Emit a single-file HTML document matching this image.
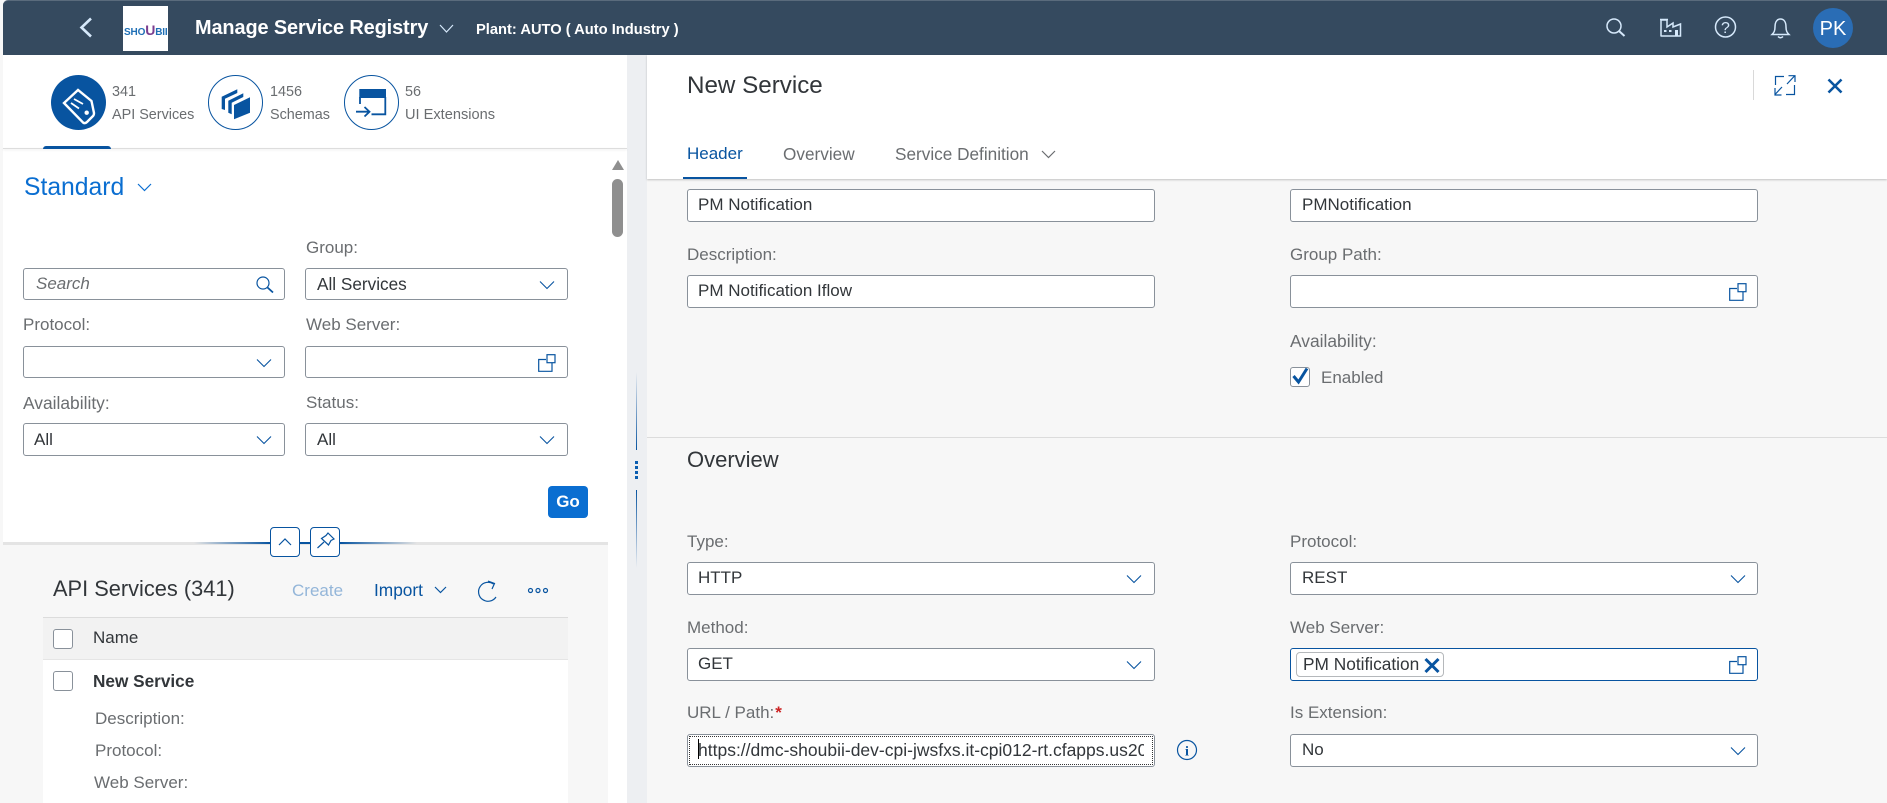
<!DOCTYPE html>
<html><head><meta charset="utf-8"><title>Manage Service Registry</title>
<style>
html,body{margin:0;padding:0;width:1887px;height:803px;overflow:hidden;background:#f7f7f7;font-family:"Liberation Sans",sans-serif}
.a{position:absolute}
.t{position:absolute;line-height:24px;height:24px;white-space:nowrap;font-size:17px;color:#32363a;margin-top:1px}
.l{color:#6a6d70}
.i{position:absolute;box-sizing:border-box;background:#fff;border:1px solid #89919a;border-radius:3px}
svg.s{position:absolute;overflow:visible;left:0;top:0}
.ic{fill:none;stroke:#0854a0;stroke-width:1.2}
.hd{fill:none;stroke:#d6e9fb;stroke-width:1.5}
</style></head><body>
<div class="a" style="left:3px;top:0;width:1884px;height:55px;background:#354a5f;border-top:1px solid #5a6b7c;box-sizing:border-box;border-top-left-radius:5px"></div>
<div class="a" style="left:123px;top:6px;width:45px;height:45px;background:#fff"></div>
<div class="t" style="left:124px;top:17px;font-size:10px;font-weight:bold;color:#1f6fb5;letter-spacing:-.15px">SHO<span style="color:#7a3d8f;font-size:14px">U</span>BII</div>
<div class="t" style="left:195px;top:15px;font-size:19.9px;font-weight:bold;color:#fff;letter-spacing:-.1px">Manage Service Registry</div>
<div class="t" style="left:476px;top:17px;font-size:14.7px;font-weight:bold;color:#fff">Plant: AUTO ( Auto Industry )</div>
<div class="a" style="left:3px;top:55px;width:624px;height:748px;background:#fff"></div>
<div class="a" style="left:627px;top:55px;width:20px;height:748px;background:#edeff2"></div>
<div class="a" style="left:647px;top:55px;width:1240px;height:124px;background:#fff;box-shadow:0 1px 2px rgba(0,0,0,.22)"></div>
<div class="a" style="left:3px;top:148px;width:624px;height:1px;background:#ddd;box-shadow:0 1px 2px rgba(0,0,0,.1)"></div>
<div class="a" style="left:43px;top:146px;width:68px;height:3px;background:#0854a0;border-radius:3px 3px 0 0"></div>
<div class="a" style="left:3px;top:545px;width:605px;height:258px;background:#f7f7f7"></div>
<div class="a" style="left:3px;top:542px;width:605px;height:3px;background:#e4e4e4"></div>
<div class="a" style="left:194px;top:542px;width:223px;height:2px;background:linear-gradient(90deg,rgba(8,84,160,0),#0854a0 34%,#0854a0 66%,rgba(8,84,160,0))"></div>
<div class="a" style="left:612px;top:179px;width:11px;height:58px;background:#8f8f8f;border-radius:6px"></div>
<div class="a" style="left:636px;top:372px;width:1px;height:78px;background:linear-gradient(180deg,rgba(8,84,160,0),#0854a0)"></div>
<div class="a" style="left:636px;top:490px;width:1px;height:78px;background:linear-gradient(0deg,rgba(8,84,160,0),#0854a0)"></div>
<div class="a" style="left:635px;top:461px;width:3px;height:3px;background:#0a5db0;box-shadow:0 5px 0 #0a5db0,0 10px 0 #0a5db0,0 15px 0 #0a5db0"></div>
<div class="a" style="left:647px;top:437px;width:1240px;height:1px;background:#dcdcdc"></div>

<div class="a" style="left:51px;top:75px;width:55px;height:55px;border-radius:50%;background:#0854a0"></div>
<div class="a" style="left:208px;top:75px;width:55px;height:55px;border-radius:50%;background:#fff;border:1px solid #0854a0;box-sizing:border-box"></div>
<div class="a" style="left:344px;top:75px;width:55px;height:55px;border-radius:50%;background:#fff;border:1px solid #0854a0;box-sizing:border-box"></div>
<div class="t l" style="left:112px;top:79px;font-size:14.4px">341</div>
<div class="t l" style="left:112px;top:102px;font-size:14.4px">API Services</div>
<div class="t l" style="left:270px;top:79px;font-size:14.4px">1456</div>
<div class="t l" style="left:270px;top:102px;font-size:14.4px">Schemas</div>
<div class="t l" style="left:405px;top:79px;font-size:14.4px">56</div>
<div class="t l" style="left:405px;top:102px;font-size:14.6px">UI Extensions</div>

<div class="t" style="left:24px;top:175px;font-size:24.7px;color:#0a6ed1">Standard</div>
<div class="t l" style="left:306px;top:235px">Group:</div>
<div class="i" style="left:23px;top:268px;width:262px;height:32px"></div>
<div class="t" style="left:36px;top:271px;font-style:italic;color:#6a6d70">Search</div>
<div class="i" style="left:305px;top:268px;width:263px;height:32px"></div>
<div class="t" style="left:317px;top:271px;font-size:17.2px">All Services</div>
<div class="t l" style="left:23px;top:312px">Protocol:</div>
<div class="t l" style="left:306px;top:312px">Web Server:</div>
<div class="i" style="left:23px;top:346px;width:262px;height:32px"></div>
<div class="i" style="left:305px;top:346px;width:263px;height:32px"></div>
<div class="t l" style="left:23px;top:390px;font-size:17.4px">Availability:</div>
<div class="t l" style="left:306px;top:390px">Status:</div>
<div class="i" style="left:23px;top:423px;width:262px;height:33px"></div>
<div class="t" style="left:34px;top:427px">All</div>
<div class="i" style="left:305px;top:423px;width:263px;height:33px"></div>
<div class="t" style="left:317px;top:427px">All</div>
<div class="a" style="left:548px;top:486px;width:40px;height:32px;background:#0a6ed1;border-radius:4px;color:#fff;font-weight:bold;font-size:17px;line-height:31px;text-align:center">Go</div>
<div class="i" style="left:270px;top:527px;width:30px;height:30px;border-color:#0854a0;border-radius:4px"></div>
<div class="i" style="left:310px;top:527px;width:30px;height:30px;border-color:#0854a0;border-radius:4px"></div>

<div class="t" style="left:53px;top:576px;font-size:21.8px">API Services (341)</div>
<div class="t" style="left:292px;top:578px;color:#94b6d9">Create</div>
<div class="t" style="left:374px;top:577px;color:#0854a0;font-size:17.3px">Import</div>
<div class="a" style="left:43px;top:617px;width:525px;height:43px;background:#f2f2f2;border-top:1px solid #dcdcdc;border-bottom:1px solid #e5e5e5;box-sizing:border-box"></div>
<div class="a" style="left:43px;top:660px;width:525px;height:143px;background:#fff"></div>
<div class="i" style="left:53px;top:629px;width:20px;height:20px"></div>
<div class="t" style="left:93px;top:625px">Name</div>
<div class="i" style="left:53px;top:671px;width:20px;height:20px"></div>
<div class="t" style="left:93px;top:668px;font-weight:bold;font-size:17.2px">New Service</div>
<div class="t l" style="left:95px;top:706px">Description:</div>
<div class="t l" style="left:95px;top:738px">Protocol:</div>
<div class="t l" style="left:94px;top:770px">Web Server:</div>

<div class="t" style="left:687px;top:73px;font-size:24.2px">New Service</div>
<div class="a" style="left:1753px;top:70px;width:1px;height:30px;background:#d9d9d9"></div>
<div class="t" style="left:687px;top:141px;color:#0854a0">Header</div>
<div class="a" style="left:683px;top:177px;width:64px;height:2px;background:#0854a0"></div>
<div class="t l" style="left:783px;top:141px;font-size:17.2px">Overview</div>
<div class="t l" style="left:895px;top:141px;font-size:17.2px">Service Definition</div>

<div class="i" style="left:687px;top:189px;width:468px;height:33px"></div>
<div class="t" style="left:698px;top:192px">PM Notification</div>
<div class="i" style="left:1290px;top:189px;width:468px;height:33px"></div>
<div class="t" style="left:1302px;top:192px">PMNotification</div>
<div class="t l" style="left:687px;top:242px">Description:</div>
<div class="t l" style="left:1290px;top:242px">Group Path:</div>
<div class="i" style="left:687px;top:275px;width:468px;height:33px"></div>
<div class="t" style="left:698px;top:278px">PM Notification Iflow</div>
<div class="i" style="left:1290px;top:275px;width:468px;height:33px"></div>
<div class="t l" style="left:1290px;top:328px;font-size:17.4px">Availability:</div>
<div class="i" style="left:1290px;top:367px;width:20px;height:20px"></div>
<div class="t l" style="left:1321px;top:365px">Enabled</div>
<div class="t" style="left:687px;top:447px;font-size:22px">Overview</div>

<div class="t l" style="left:687px;top:529px">Type:</div>
<div class="t l" style="left:1290px;top:529px">Protocol:</div>
<div class="i" style="left:687px;top:562px;width:468px;height:33px"></div>
<div class="t" style="left:698px;top:565px">HTTP</div>
<div class="i" style="left:1290px;top:562px;width:468px;height:33px"></div>
<div class="t" style="left:1302px;top:565px">REST</div>
<div class="t l" style="left:687px;top:615px">Method:</div>
<div class="t l" style="left:1290px;top:615px">Web Server:</div>
<div class="i" style="left:687px;top:648px;width:468px;height:33px"></div>
<div class="t" style="left:698px;top:651px">GET</div>
<div class="i" style="left:1290px;top:648px;width:468px;height:33px;border-color:#0854a0"></div>
<div class="a" style="left:1296px;top:652px;width:148px;height:25px;box-sizing:border-box;border:1px solid #b5b8bb;border-radius:4px;background:#fff"></div>
<div class="t" style="left:1303px;top:651px;font-size:17.3px">PM Notification</div>
<div class="t l" style="left:687px;top:700px">URL / Path:<span style="color:#cc2222;font-weight:bold;margin-left:1px">*</span></div>
<div class="t l" style="left:1290px;top:700px">Is Extension:</div>
<div class="i" style="left:687px;top:734px;width:468px;height:33px"></div>
<div class="a" style="left:689px;top:736px;width:464px;height:29px;box-sizing:border-box;border:1px dotted #333"></div>
<div class="a" style="left:698px;top:738px;width:446px;height:26px;overflow:hidden"><div class="t" style="left:0;top:-1px;font-size:17.5px">https://dmc-shoubii-dev-cpi-jwsfxs.it-cpi012-rt.cfapps.us20.hana.ondemand.com</div></div>
<div class="a" style="left:698px;top:739px;width:1px;height:20px;background:#000"></div>
<div class="i" style="left:1290px;top:734px;width:468px;height:33px"></div>
<div class="t" style="left:1302px;top:737px">No</div>

<svg class="s" width="1887" height="803" viewBox="0 0 1887 803">
<defs>
<symbol id="chev" viewBox="0 0 16 10" overflow="visible"><path d="M1 1.5L8 8.5L15 1.5" fill="none" stroke="#0854a0" stroke-width="1.1"/></symbol>
<symbol id="vh" viewBox="0 0 18 18" overflow="visible"><path d="M8 5.5H.7V17.3H14V9" fill="none" stroke="#0854a0" stroke-width="1.2"/><rect x="9" y=".7" width="8" height="8" fill="none" stroke="#0854a0" stroke-width="1.2"/></symbol>
</defs>
<!-- header -->
<path d="M91 18.500L81.500 27.500L91 36.500" fill="none" stroke="#d6e9fb" stroke-width="2.600"/>
<path d="M440 25L446.500 32L453 25" fill="none" stroke="#d6e9fb" stroke-width="1.200"/>
<circle class="hd" cx="1614" cy="26" r="7"/><path class="hd" d="M1619 31L1624.500 36" style="stroke-width:2"/>
<path class="hd" d="M1661 36V20H1667V27L1673 23V27L1680.500 24V36H1660.500ZM1660 19.500H1668"/>
<path d="M1664 30h2.500v2h-2.500zM1669 30h2.500v2h-2.500zM1675 30h3v6h-3z" fill="#d6e9fb"/>
<circle class="hd" cx="1725.500" cy="27" r="10"/>
<text x="1725.500" y="33" font-size="16" text-anchor="middle" fill="#d6e9fb" font-family="Liberation Sans">?</text>
<path class="hd" d="M1772 34.500c2-2 3-3.500 3-7.500c0-5 2-8 5.500-8s5.500 3 5.500 8c0 4 1 5.500 3 7.500zM1778 36.500q2.500 2.500 5 0"/>
<circle cx="1833" cy="28" r="20" fill="#2a6db5"/>
<text x="1833" y="35" font-size="20" text-anchor="middle" fill="#fff" font-family="Liberation Sans">PK</text>
<!-- tabs -->
<g fill="none" stroke="#fff" stroke-width="2.400">
<path d="M78 90L64 103L83 122.500Q85 124 87 122L93 116Q94 115 94 113L91.500 101Z"/>
<path d="M74 99L83 104M71 103L79 108.500" stroke-width="1.800"/></g>
<circle cx="86.700" cy="112.700" r="2.200" fill="#fff"/>
<g fill="#0854a0"><path d="M234 105L250 97.300V112.700L234 119.300Z"/><path d="M228.300 100.700L243.300 93.300V97L231.700 102.700V114.300L228.300 112.700Z"/><path d="M221.700 96.700L237.300 89.300V93L225 98.700V110L221.700 109Z"/></g>
<path d="M359.300 89h26.700v9h-26.700z" fill="#0854a0"/>
<path d="M360 97V104M385.300 97V114.300H371.500M356 111.700H369M364.500 107L369.500 111.700L364.500 116.500" fill="none" stroke="#0854a0" stroke-width="1.800"/>
<path d="M138 184L144.500 190.500L151 184" class="ic" style="stroke:#0a6ed1"/>
<path d="M612 170L618 160L624 170Z" fill="#8f8f8f"/>
<!-- filter -->
<circle class="ic" cx="263" cy="283" r="6"/><path class="ic" d="M267.500 287.500L273 292.500" style="stroke-width:1.800"/>
<use href="#chev" x="539" y="280" width="16" height="10"/>
<use href="#chev" x="256" y="358" width="16" height="10"/>
<use href="#vh" x="538" y="354" width="18" height="18"/>
<use href="#chev" x="256" y="435" width="16" height="10"/>
<use href="#chev" x="539" y="435" width="16" height="10"/>
<path class="ic" d="M279 545L285 539L291 545"/>
<path class="ic" d="M328 533L334 539L331 540.500L328.500 545L321.500 538.500L326 535.500ZM324 542L317.500 548"/>
<path d="M435 587L440.500 592.500L446 587" class="ic"/>
<path class="ic" d="M493.500 584A9.500 9.500 0 1 0 496 597M488 581L494.500 583.500L492 589"/>
<g class="ic"><circle cx="530.500" cy="590.500" r="2"/><circle cx="538" cy="590.500" r="2"/><circle cx="545.500" cy="590.500" r="2"/></g>
<!-- detail -->
<path d="M1775.500 85V76.500H1784M1794.500 85V94.500H1786M1787 84L1794.500 76M1788.500 75.700H1795V82M1782 87L1775 94.500M1775 88V95H1781.500" class="ic"/>
<path d="M1828.500 79.500L1841.500 92.500M1841.500 79.500L1828.500 92.500" fill="none" stroke="#0854a0" stroke-width="2.600"/>
<path d="M1042 151L1048.500 157.500L1055 151" class="ic" style="stroke:#6a6d70"/>
<use href="#vh" x="1729" y="283" width="18" height="18"/>
<path d="M1293.500 376L1298.500 382L1307 368.500" fill="none" stroke="#0854a0" stroke-width="3"/>
<use href="#chev" x="1126" y="574" width="16" height="10"/>
<use href="#chev" x="1730" y="574" width="16" height="10"/>
<use href="#chev" x="1126" y="660" width="16" height="10"/>
<use href="#vh" x="1729" y="656" width="18" height="18"/>
<use href="#chev" x="1730" y="746" width="16" height="10"/>
<path d="M1425.500 659L1438.500 672M1438.500 659L1425.500 672" fill="none" stroke="#0854a0" stroke-width="3"/>
<circle class="ic" cx="1187" cy="750" r="9.500"/>
<text x="1187" y="755.500" font-size="14" font-weight="bold" text-anchor="middle" fill="#0854a0" font-family="Liberation Serif">i</text>
</svg>
</body></html>
